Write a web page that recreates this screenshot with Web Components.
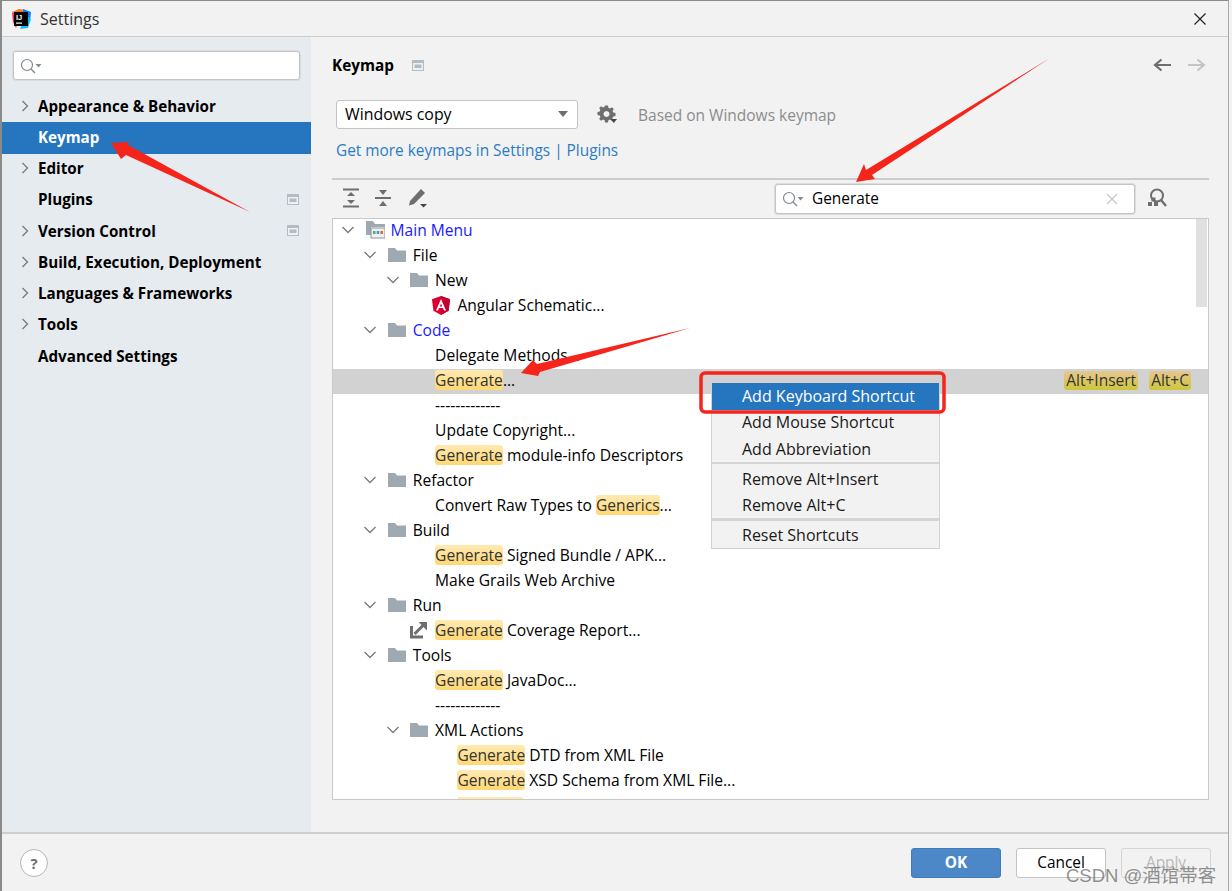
<!DOCTYPE html>
<html>
<head>
<meta charset="utf-8">
<title>Settings</title>
<style>
  html, body { margin: 0; padding: 0; height: 100%; background: #f2f2f2; overflow: hidden; }
  body { font-family: "Open Sans", "Noto Sans CJK SC", sans-serif; font-size: 15.4px; color: #000; }
</style>
</head>
<body>
<settings-dialog>
  <title-bar slot="title"></title-bar>
  <settings-side slot="side"></settings-side>
  <keymap-pane slot="main"></keymap-pane>
  <dialog-foot slot="foot"></dialog-foot>
</settings-dialog>

<script>
(function () {
  const FONT = `"Open Sans", "Noto Sans CJK SC", sans-serif`;

  const chevRight = `<svg width="16" height="16" viewBox="0 0 16 16"><path d="M5.5 3 L10.5 8 L5.5 13" fill="none" stroke="#7a7a7a" stroke-width="1.3"/></svg>`;
  const chevDown = `<svg width="16" height="16" viewBox="0 0 16 16"><path d="M2.5 5 L8 10.5 L13.5 5" fill="none" stroke="#7a7a7a" stroke-width="1.3"/></svg>`;
  const folder = `<svg width="18" height="16" viewBox="0 0 18 16"><path d="M0 1 H7 L9 3.5 H18 V15 H0 Z" fill="#9fa9b2"/></svg>`;
  const mainMenuIcon = `<svg width="19" height="18" viewBox="0 0 19 18"><path d="M0 0 H7 L9 3 H19 V6 H5 V14 H0 Z" fill="#9fa9b2"/><rect x="5" y="7" width="14" height="10" fill="#eef0f2" stroke="#8d969e"/><rect x="7" y="10" width="2.5" height="3" fill="#59a869"/><rect x="10.7" y="10" width="2.5" height="3" fill="#389fd6"/><rect x="14.4" y="10" width="2.5" height="3" fill="#f26522"/></svg>`;
  const angular = `<svg width="18" height="19" viewBox="0 0 18 19"><path d="M9 0 L18 3.2 L16.6 14.8 L9 19 L1.4 14.8 L0 3.2 Z" fill="#dd0031"/><path d="M9 0 L18 3.2 L16.6 14.8 L9 19 Z" fill="#c3002f"/><path d="M9 3 L4 14.5 H6 L7 12 H11 L12 14.5 H14 Z M7.8 10.4 L9 7.4 L10.2 10.4 Z" fill="#fff" fill-rule="evenodd"/></svg>`;
  const coverage = `<svg width="18" height="18" viewBox="0 0 18 18"><path d="M1.5 5 V16 H13" fill="none" stroke="#6e6e6e" stroke-width="3"/><path d="M4.5 13 L14 3.5" stroke="#6e6e6e" stroke-width="3"/><path d="M8.5 1 H17 V9.5 Z" fill="#6e6e6e"/></svg>`;
  const searchGlyph = `<svg width="26" height="16" viewBox="0 0 26 16"><circle cx="7" cy="7" r="5.5" fill="none" stroke="#808a91" stroke-width="1.2"/><path d="M11 11 L15 15" stroke="#808a91" stroke-width="1.5"/><path d="M15.5 6 H21.5 L18.5 9.5 Z" fill="#808a91"/></svg>`;
  const stackIcon = `<svg width="12" height="11" viewBox="0 0 12 11"><rect x=".5" y=".5" width="11" height="10" fill="#eef1f3" stroke="#b4bcc3"/><rect x="1" y="1" width="10" height="2" fill="#b4bcc3"/><rect x="2.5" y="4.5" width="7" height="3.5" fill="#b4bcc3"/></svg>`;

  // tiny helper so each element does not repeat the shadow boilerplate
  class Base extends HTMLElement {
    connectedCallback() {
      if (!this.shadowRoot) this.attachShadow({mode: 'open'});
      this.shadowRoot.innerHTML = this.render();
    }
  }

  class SettingsDialog extends Base {
    render() { return `
      <style>
        :host { display: flex; flex-direction: column; position: relative; width: 1232px; height: 891px; box-sizing: border-box;
                background: #f2f2f2; font-family: ${FONT}; font-size: 15.4px; overflow: hidden; }
        .win { display: flex; flex-direction: column; flex: 1; min-height: 0; margin-right: 3px; border-left: 2px solid #8a8a8a; border-top: 1px solid #8a8a8a; border-right: 1px solid #a8a8a8; }
        .mid { display: flex; flex: 1; min-height: 0; }
        ::slotted([slot=side]) { width: 309px; flex: none; }
        ::slotted([slot=main]) { flex: 1; min-width: 0; }
      </style>
      <div class="win">
        <slot name="title"></slot>
        <div class="mid"><slot name="side"></slot><slot name="main"></slot></div>
        <slot name="foot"></slot>
      </div>
      <key-popup></key-popup>
      <red-arrows></red-arrows>
      <water-mark></water-mark>`; }
  }

  class TitleBar extends Base {
    render() { return `
      <style>
        :host { display: flex; align-items: center; height: 35px; flex: none; border-bottom: 1px solid #cdcdcd; background: #f2f2f2; padding: 0 20px 0 9px; font-size: 16px; color: #333; }
        svg.logo { margin-right: 9px; }
        span { flex: 1; }
      </style>
      <svg class="logo" width="20" height="20" viewBox="0 0 20 20">
        <path d="M1 3 L8 0 L15 1 L12 8 Z" fill="#f97a12"/>
        <path d="M12 0 L20 3 L19 12 L13 8 Z" fill="#087cfa"/>
        <path d="M1 3 L9 8 L5 19 L2 13 Z" fill="#fe2857"/>
        <path d="M15 6 L20 10 L17 19 L9 20 Z" fill="#07c3f2"/>
        <rect x="3" y="3" width="14" height="14" fill="#000"/>
        <rect x="5" y="13.5" width="6" height="1.2" fill="#fff"/>
        <text x="5" y="10.5" font-size="7.5" font-weight="700" fill="#fff" font-family="Liberation Sans">IJ</text>
      </svg>
      <span>Settings</span>
      <svg width="16" height="16" viewBox="0 0 16 16"><path d="M2.5 2.5 L13.5 13.5 M13.5 2.5 L2.5 13.5" stroke="#222" stroke-width="1.2"/></svg>`; }
  }

  class SideRow extends Base {
    render() {
      const open = this.hasAttribute('arrow') ? chevRight : '';
      const badge = this.hasAttribute('badge') ? stackIcon : '';
      return `
      <style>
        :host { display: flex; align-items: center; height: 31.25px; box-sizing: border-box; padding: 0 12px 2px 15px; font-weight: 700; font-size: 15.2px; color: #000; }
        :host([selected]) { background: #2675bf; color: #fff; }
        .chev { width: 21px; display: flex; flex: none; }
        .label { flex: 1; }
        .badge { display: flex; }
      </style>
      <span class="chev">${open}</span><span class="label"><slot></slot></span><span class="badge">${badge}</span>`;
    }
  }

  class SettingsSide extends Base {
    render() { return `
      <style>
        :host { display: flex; flex-direction: column; background: #e6ebf0; padding: 14px 0 0; box-sizing: border-box; }
        .wrap { padding: 0 11px 0 11px; }
        search-box { height: 29px; }
        nav { margin-top: 11px; display: flex; flex-direction: column; }
      </style>
      <div class="wrap"><search-box></search-box></div>
      <nav>
        <side-row arrow>Appearance &amp; Behavior</side-row>
        <side-row selected>Keymap</side-row>
        <side-row arrow>Editor</side-row>
        <side-row badge>Plugins</side-row>
        <side-row arrow badge>Version Control</side-row>
        <side-row arrow>Build, Execution, Deployment</side-row>
        <side-row arrow>Languages &amp; Frameworks</side-row>
        <side-row arrow>Tools</side-row>
        <side-row>Advanced Settings</side-row>
      </nav>`; }
  }

  class SearchBox extends Base {
    render() {
      const val = this.getAttribute('value') || '';
      const clear = val ? `<svg width="12" height="12" viewBox="0 0 12 12"><path d="M1 1 L11 11 M11 1 L1 11" stroke="#c0c4c8" stroke-width="1.2"/></svg>` : '';
      return `
      <style>
        :host { display: flex; align-items: center; box-sizing: border-box; background: #fff; border: 1px solid #c4c4c4; border-radius: 3px; padding: 0 16px 0 6px; box-shadow: 0 0 0 1px #dcdcdc; font-size: 15.4px; color: #000; }
        svg:first-child { flex: none; }
        .v { flex: 1; padding-left: 4px; }
      </style>
      ${searchGlyph}<span class="v">${val}</span>${clear}`;
    }
  }

  class KeymapPane extends Base {
    render() { return `
      <style>
        :host { display: flex; flex-direction: column; background: #f2f2f2; box-sizing: border-box; padding: 0 19px 0 21px; min-height: 0; }
        .head { height: 58px; display: flex; align-items: center; gap: 18px; font-weight: 700; font-size: 15.3px; flex: none; padding-bottom: 2px; box-sizing: border-box; }
        .head .sp { flex: 1; }
        .nav { display: flex; gap: 14px; margin-right: 3px; }
        .row { display: flex; align-items: center; padding-left: 4px; height: 30px; flex: none; margin-top: 4px; }
        .sel { width: 242px; height: 29px; box-sizing: border-box; background: #fff; border: 1px solid #c4c4c4; border-radius: 3px; display: flex; align-items: center; padding: 0 9px 0 8px; justify-content: space-between; font-size: 15.9px; }
        .sel i { width: 0; height: 0; border-left: 5.5px solid transparent; border-right: 5.5px solid transparent; border-top: 6px solid #6e6e6e; }
        .gear { margin: 0 21px 0 19px; display: flex; }
        .based { color: #8c8c8c; padding-top: 1px; font-size: 15.5px; }
        .link { padding: 10px 0 0 4px; height: 48px; box-sizing: border-box; color: #2b7cc4; flex: none; line-height: 24px; }
        .rule { height: 2px; background: #cbcbcb; margin-top: 1px; flex: none; }
        .tools { display: flex; align-items: center; height: 38px; flex: none; box-sizing: border-box; padding-left: 10px; padding-bottom: 3px; }
        .tools svg { flex: none; }
        .tools .sp { flex: 1; }
        search-box { width: 360px; height: 30px; margin-top: 2px; }
        .find { margin: 0 42px 0 12px; display: flex; }
        key-tree { flex: 1; min-height: 0; }
        .gap { height: 32px; flex: none; }
      </style>
      <div class="head">
        <span>Keymap</span>${stackIcon}
        <span class="sp"></span>
        <span class="nav">
          <svg width="20" height="16" viewBox="0 0 20 16"><path d="M19 8 H4 M9.5 2.5 L3 8 L9.5 13.5" fill="none" stroke="#6e6e6e" stroke-width="2.2"/></svg>
          <svg width="20" height="16" viewBox="0 0 20 16"><path d="M2 8 H18 M11.5 2.5 L18 8 L11.5 13.5" fill="none" stroke="#c4c4c4" stroke-width="2.2"/></svg>
        </span>
      </div>
      <div class="row">
        <div class="sel"><span>Windows copy</span><i></i></div>
        <span class="gear"><svg width="20" height="20" viewBox="0 0 20 20"><path d="M8 1.5 H11 L11.4 3.7 L13 4.4 L14.9 3.2 L16.8 5.1 L15.6 7 L16.3 8.6 L18.5 9 V12 L16.3 12.4 L15.6 14 L14.9 16.8 L13 15.6 L11.4 16.3 L11 18.5 H8 L7.6 16.3 L6 15.6 L4.1 16.8 L2.2 14.9 L3.4 13 L2.7 11.4 L.5 11 V8 L2.7 7.6 L3.4 6 L2.2 4.1 L4.1 2.2 L6 3.4 L7.6 2.7 Z M9.5 7 A3 3 0 1 0 9.51 7 Z" fill="#6e6e6e" fill-rule="evenodd"/><path d="M13.5 15 H20 L16.75 19 Z" fill="#444"/></svg></span>
        <span class="based">Based on Windows keymap</span>
      </div>
      <div class="link">Get more keymaps in Settings | Plugins</div>
      <div class="rule"></div>
      <div class="tools">
        <svg width="18" height="20" viewBox="0 0 18 20"><path d="M1 1.5 H17 M1 18.5 H17" stroke="#6e6e6e" stroke-width="2"/><path d="M9 4 L13 8 H5 Z M9 16 L5 12 H13 Z" fill="#6e6e6e"/></svg>
        <svg style="margin-left:14px" width="18" height="20" viewBox="0 0 18 20"><path d="M1 10 H17" stroke="#6e6e6e" stroke-width="2"/><path d="M5 2 H13 L9 7 Z M9 13 L13 18 H5 Z" fill="#6e6e6e"/></svg>
        <svg style="margin-left:15px" width="20" height="20" viewBox="0 0 20 20"><path d="M14 1 L18 5 L7 16 L2 17.5 L3 13 Z" fill="#6e6e6e"/><path d="M13 16 H20 L16.5 19.5 Z" fill="#444"/></svg>
        <span class="sp"></span>
        <search-box value="Generate"></search-box>
        <span class="find"><svg width="20" height="20" viewBox="0 0 20 20"><circle cx="10" cy="7.5" r="6" fill="none" stroke="#6e6e6e" stroke-width="2"/><path d="M14 12 L19 18" stroke="#6e6e6e" stroke-width="2.4"/><rect x="1" y="14" width="4" height="4" fill="#6e6e6e"/><rect x="7" y="14" width="4" height="4" fill="#6e6e6e"/><rect x="4.5" y="9.5" width="4" height="4" fill="#6e6e6e"/></svg></span>
      </div>
      <key-tree></key-tree>
      <div class="gap"></div>`; }
  }

  class TreeRow extends Base {
    render() {
      const level = +this.getAttribute('level') || 0;
      const arrow = this.hasAttribute('open') ? chevDown : '';
      const icons = { folder, menu: mainMenuIcon, angular, coverage };
      const icon = icons[this.getAttribute('icon')] || '';
      // Generate is the search match, it gets the yellow chip
      const hit = this.getAttribute('hit');
      const rest = this.getAttribute('text') || '';
      const chip = hit ? `<span class="hit">${hit}</span>` : '';
      // last row sits under the tree's bottom edge, only the top of its chip shows
      const stub = this.hasAttribute('stub') ? `<span class="hit stub"></span>` : '';
      const keys = this.hasAttribute('keys') ? `<span class="keys"><b>Alt+Insert</b><b>Alt+C</b></span>` : '';
      return `
      <style>
        :host { display: flex; align-items: center; height: 25px; box-sizing: border-box; padding-left: ${7 + level * 22.3}px; padding-bottom: 3px; white-space: nowrap; flex: none; font-size: 15.6px; color: #000; }
        :host([selected]) { background: #d2d2d2; }
        :host([blue]) .t { color: #1a1aff; }
        .chev { width: 16px; flex: none; display: flex; margin-right: 9.5px; }
        .ic { width: 18px; flex: none; margin-right: 7px; display: flex; justify-content: ${this.getAttribute('icon') === 'folder' || this.getAttribute('icon') === 'menu' ? 'flex-start' : 'flex-end'}; }
        .ic svg { flex: none; }
        .hit { display: inline-block; line-height: 20px; background: linear-gradient(#ffeab3, #ffd873); border-radius: 3px; color: #333; }
        .stub { width: 67px; height: 20px; margin-top: 3px; vertical-align: top; }
        .t { flex: 1; }
        .keys { display: flex; gap: 11px; margin-right: 17px; }
        b { font-weight: 400; font-size: 15.5px; color: #333; padding: 0 2px; height: 19px; line-height: 19px; background: linear-gradient(#e6c692, #cfc63a); border-radius: 3px; }
      </style>
      <span class="chev">${arrow}</span><span class="ic">${icon}</span><span class="t">${chip}${stub}${rest}</span>${keys}`;
    }
  }

  class KeyTree extends Base {
    render() {
      const rows = [
        `level=0 open icon=menu blue text="Main Menu"`,
        `level=1 open icon=folder text="File"`,
        `level=2 open icon=folder text="New"`,
        `level=3 icon=angular text="Angular Schematic..."`,
        `level=1 open icon=folder blue text="Code"`,
        `level=2 text="Delegate Methods..."`,
        `level=2 selected keys hit="Generate" text="..."`,
        `level=2 text="-------------"`,
        `level=2 text="Update Copyright..."`,
        `level=2 hit="Generate" text=" module-info Descriptors"`,
        `level=1 open icon=folder text="Refactor"`,
        `level=2 text="Convert Raw Types to <span class='hit'>Generics</span>..."`,
        `level=1 open icon=folder text="Build"`,
        `level=2 hit="Generate" text=" Signed Bundle / APK..."`,
        `level=2 text="Make Grails Web Archive"`,
        `level=1 open icon=folder text="Run"`,
        `level=2 icon=coverage hit="Generate" text=" Coverage Report..."`,
        `level=1 open icon=folder text="Tools"`,
        `level=2 hit="Generate" text=" JavaDoc..."`,
        `level=2 text="-------------"`,
        `level=2 open icon=folder text="XML Actions"`,
        `level=3 hit="Generate" text=" DTD from XML File"`,
        `level=3 hit="Generate" text=" XSD Schema from XML File..."`,
        `level=3 stub`,
      ].map(r => `<tree-row ${r}></tree-row>`).join('');
      return `
      <style>
        :host { display: block; position: relative; background: #fff; border: 1px solid #c9c9c9; border-top-width: 1px; overflow: hidden; box-sizing: border-box; }
        .list { display: flex; flex-direction: column; }
        .bar { position: absolute; right: 1px; top: 0; width: 11px; height: 88px; background: #e0e0e0; }
      </style>
      <div class="list">${rows}</div><div class="bar"></div>`;
    }
  }

  class DialogFoot extends Base {
    render() { return `
      <style>
        :host { display: flex; align-items: center; height: 59px; flex: none; border-top: 2px solid #cecece; box-sizing: border-box; background: #f2f2f2; padding: 0 17px 0 18px; gap: 15px; }
        .help { width: 28px; height: 28px; box-sizing: border-box; border: 1px solid #b5b5b5; border-radius: 50%; background: #fff; display: flex; align-items: center; justify-content: center; font-weight: 700; color: #6e6e6e; font-size: 15px; }
        .sp { flex: 1; }
        button { font: inherit; width: 90px; height: 30px; box-sizing: border-box; border-radius: 3px; border: 1px solid #c4c4c4; background: #fff; color: #000; padding: 0; }
        .ok { background: #4c88c8; border-color: #3f7cbd; color: #fff; font-weight: 700; }
        .off { background: #f2f2f2; color: #b8b8b8; border-color: #d6d6d6; }
      </style>
      <div class="help">?</div><span class="sp"></span>
      <button class="ok">OK</button><button>Cancel</button><button class="off">Apply</button>`; }
  }

  class KeyPopup extends Base {
    render() { return `
      <style>
        :host { position: absolute; left: 711px; top: 382px; width: 229px; box-sizing: border-box; background: #f2f2f2; border: 1px solid #d2d2d2; font-size: 16px; color: #1a1a1a; }
        div { height: 26px; line-height: 26px; padding-left: 30px; white-space: nowrap; }
        .on { background: #2675bf; color: #fff; height: 27px; }
        hr { margin: 0; border: 0; height: 2px; background: #d4d4d4; }
      </style>
      <div class="on">Add Keyboard Shortcut</div>
      <div style="line-height:24px">Add Mouse Shortcut</div>
      <div>Add Abbreviation</div>
      <hr style="margin-bottom:2px">
      <div>Remove Alt+Insert</div>
      <div>Remove Alt+C</div>
      <hr style="height:3px;margin-bottom:1px">
      <div>Reset Shortcuts</div>`; }
  }

  // annotations painted on top of the screenshot
  class RedArrows extends Base {
    render() { return `
      <style>:host { position: absolute; inset: 0; pointer-events: none; }</style>
      <svg width="1232" height="891" viewBox="0 0 1232 891">
        <g fill="#f5251c">
          <polygon points="111,143 129,142 128,145 250,212 126,155 121,159"/>
          <polygon points="856,182 864,164 866,170 1050,58 872,175 875,179"/>
          <polygon points="521,373 533,360 537,364 690,328 540,372 538,376"/>
        </g>
        <rect x="701" y="373" width="243" height="39" rx="4" fill="none" stroke="#f5251c" stroke-width="3.5"/>
      </svg>`; }
  }

  class WaterMark extends Base {
    render() { return `
      <style>:host { position: absolute; left: 1066px; top: 861px; font-size: 18.5px; color: rgba(110,110,110,.75); white-space: nowrap; font-family: "Liberation Sans", "Noto Sans CJK SC", sans-serif; }</style>
      CSDN @酒馆帯客`; }
  }

  const defs = { 'settings-dialog': SettingsDialog, 'title-bar': TitleBar, 'side-row': SideRow, 'settings-side': SettingsSide,
    'search-box': SearchBox, 'keymap-pane': KeymapPane, 'tree-row': TreeRow, 'key-tree': KeyTree, 'dialog-foot': DialogFoot,
    'key-popup': KeyPopup, 'red-arrows': RedArrows, 'water-mark': WaterMark };
  Object.keys(defs).forEach(n => customElements.define(n, defs[n]));
})();
</script>
</body>
</html>
